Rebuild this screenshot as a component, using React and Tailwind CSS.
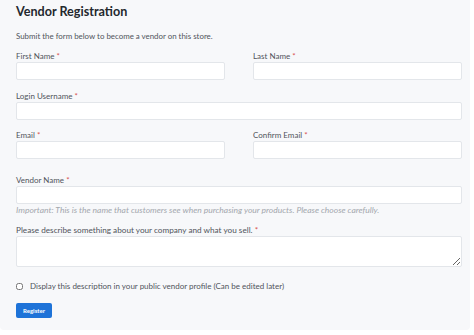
import React from 'react';

function Label({ children, required = true }) {
  return (
    <label className="block text-[8px] leading-[10px] text-[#50545a]">
      {children}
      {required && <span className="text-[#d9534f]"> *</span>}
    </label>
  );
}

function Input({ className = '' }) {
  return (
    <input
      type="text"
      className={`mt-px block h-[18px] w-full rounded-[2px] border border-[#e3e6ea] bg-white outline-none ${className}`}
    />
  );
}

export default function App() {
  return (
    <div className="min-h-[335px] bg-white" style={{ fontFamily: 'Lato, "Open Sans", sans-serif' }}>
      <div className="h-[330px] w-[470px] rounded-b-[4px] bg-[#f7f8fa]">
        <div className="ml-[16px] w-[446px] pt-[4px]">
          <h1 className="text-[12.6px] font-bold leading-[16px] text-[#23282d]">Vendor Registration</h1>
          <p className="mt-[10px] text-[7.9px] leading-[12px] text-[#50545a]">
            Submit the form below to become a vendor on this store.
          </p>

          <div className="mt-[9px] grid grid-cols-2 gap-x-[28px]">
            <div>
              <Label>First Name</Label>
              <Input />
            </div>
            <div>
              <Label>Last Name</Label>
              <Input />
            </div>
          </div>

          <div className="mt-[11px]">
            <Label>Login Username</Label>
            <Input />
          </div>

          <div className="mt-[10px] grid grid-cols-2 gap-x-[28px]">
            <div>
              <Label>Email</Label>
              <Input />
            </div>
            <div>
              <Label>Confirm Email</Label>
              <Input />
            </div>
          </div>

          <div className="mt-[16px]">
            <Label>Vendor Name</Label>
            <Input />
            <p className="mt-px text-[8.5px] italic leading-[10px] text-[#a3a7ad]">
              Important: This is the name that customers see when purchasing your products. Please choose carefully.
            </p>
          </div>

          <div className="mt-[10px]">
            <label className="block text-[8.2px] leading-[10px] text-[#50545a]">
              Please describe something about your company and what you sell.
              <span className="text-[#d9534f]"> *</span>
            </label>
            <textarea className="mt-px block h-[31px] w-full resize-y rounded-[2px] border border-[#e3e6ea] bg-white outline-none" />
          </div>

          <label className="mt-[14px] flex h-[10px] items-center gap-[7px] text-[8px] leading-[10px] text-[#50545a]">
            <input type="checkbox" className="m-0 h-[7px] w-[7px]" />
            Display this description in your public vendor profile (Can be edited later)
          </label>

          <button
            type="button"
            className="mt-[12px] flex h-[15px] w-[36px] items-center justify-center rounded-[2px] bg-[#1e73d8] text-[6px] font-bold text-white"
          >
            Register
          </button>
        </div>
      </div>
    </div>
  );
}
